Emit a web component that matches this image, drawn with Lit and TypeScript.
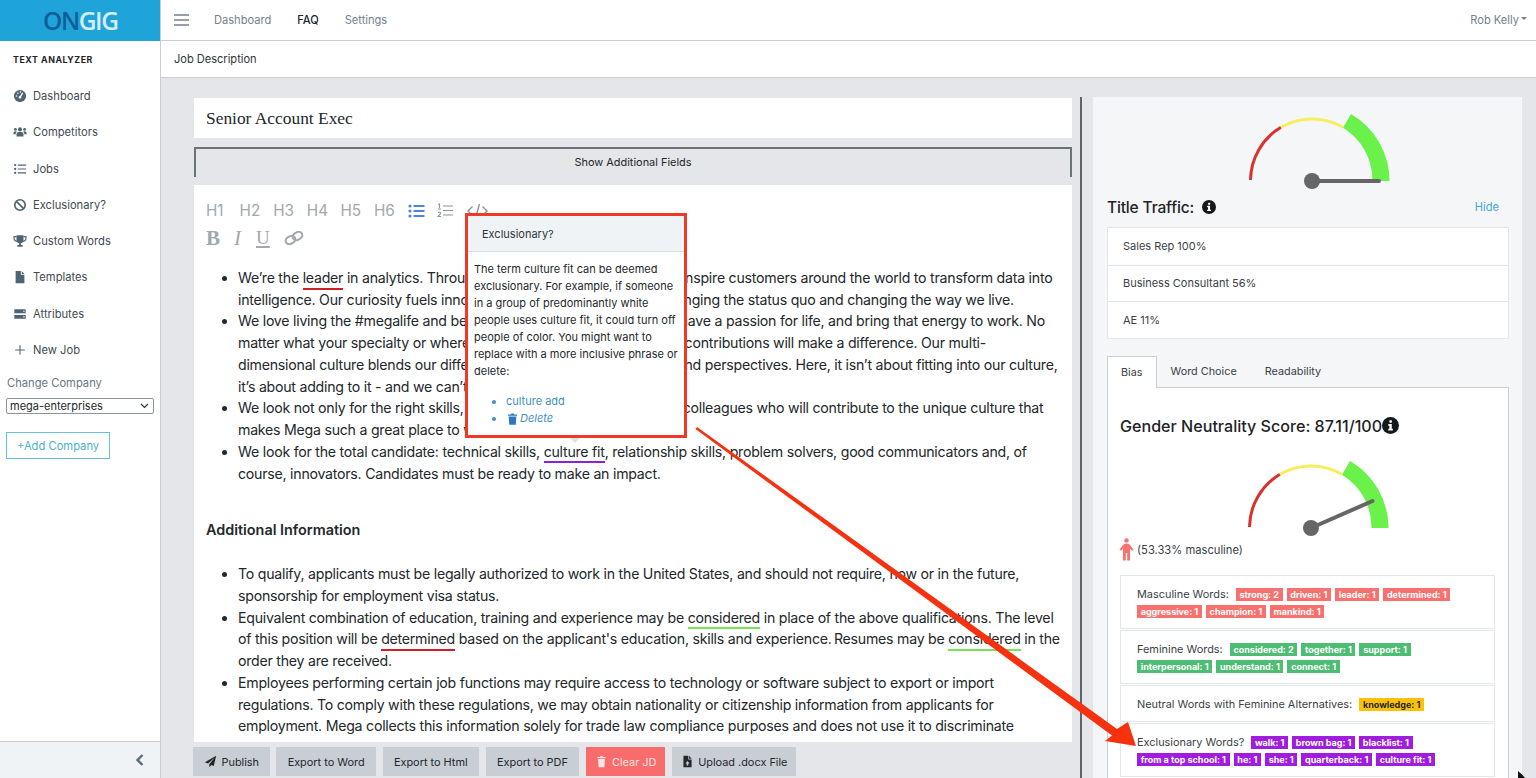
import { LitElement, html, css, svg } from "lit";
import { customElement } from "lit/decorators.js";

const gauge = (tx: number, ty: number) => html`<svg class="gauge" width="160" height="90" viewBox="-80 -80 160 90">
  <path d="M-61.5 -1A62 62 0 0 1 -31 -53.7" fill="none" stroke="#d9312b" stroke-width="3"/>
  <path d="M-31 -53.7A62 62 0 0 1 31 -53.7" fill="none" stroke="#f7ee5f" stroke-width="3"/>
  <path d="M31 -53.3L39 -67A77.5 77.5 0 0 1 77.5 0H60.5A61.5 61.5 0 0 0 31 -53.3Z" fill="#6bf24a"/>
  <line x1="0" y1="0" x2="${tx}" y2="${ty}" stroke="#666" stroke-width="4" stroke-linecap="round"/>
  <circle r="8" fill="#666"/>
</svg>`;

const info = (s: number) => html`<svg width="${s}" height="${s}" viewBox="0 0 16 16"><circle cx="8" cy="8" r="8" fill="#15191c"/><rect x="6.9" y="3" width="2.4" height="2.4" rx=".6" fill="#fff"/><path d="M5.9 6.6H9.2V11H10.2V12.6H5.9V11H6.9V8.2H5.9Z" fill="#fff"/></svg>`;

const I: Record<string, any> = {
  dash: svg`<circle cx="8" cy="8" r="7" fill="currentColor"/><path d="M8 9.5L11 4.5" stroke="#fff" stroke-width="1.5"/><circle cx="8" cy="9.5" r="1.4" fill="#fff"/><circle cx="4" cy="8" r=".9" fill="#fff"/><circle cx="5.5" cy="4.8" r=".9" fill="#fff"/><circle cx="8.5" cy="3.5" r=".9" fill="#fff"/>`,
  users: svg`<circle cx="8" cy="5" r="2.3" fill="currentColor"/><circle cx="2.8" cy="5" r="1.6" fill="currentColor"/><circle cx="13.2" cy="5" r="1.6" fill="currentColor"/><path d="M4 13V10.5Q4 8 6.5 8H9.5Q12 8 12 10.5V13Z M0.5 9.5Q.5 7.2 2.8 7.2Q3.8 7.2 4.4 7.8Q3.1 8.8 3 10.5H.5Z M15.5 9.5Q15.5 7.2 13.2 7.2Q12.2 7.2 11.6 7.8Q12.9 8.8 13 10.5H15.5Z" fill="currentColor"/>`,
  list: svg`<circle cx="2.5" cy="3.5" r="1.3" fill="currentColor"/><circle cx="2.5" cy="8" r="1.3" fill="currentColor"/><circle cx="2.5" cy="12.5" r="1.3" fill="currentColor"/><path d="M5.5 3.5H15M5.5 8H15M5.5 12.5H15" stroke="currentColor" stroke-width="1.4"/>`,
  ban: svg`<circle cx="8" cy="8" r="6" fill="none" stroke="currentColor" stroke-width="1.9"/><path d="M3.8 3.8L12.2 12.2" stroke="currentColor" stroke-width="1.9"/>`,
  trophy: svg`<path d="M4 1.5H12V6.5Q12 10 9 10.5V12.5H11V14.5H5V12.5H7V10.5Q4 10 4 6.5Z" fill="currentColor"/><path d="M4 3H1.2V5Q1.2 7.8 4.5 8.4M12 3H14.8V5Q14.8 7.8 11.5 8.4" fill="none" stroke="currentColor" stroke-width="1.3"/>`,
  file: svg`<path d="M3 1H9V5.5H13V15H3ZM10 1L13 4.5H10Z" fill="currentColor"/>`,
  server: svg`<path d="M1.5 2.5H14.5V7H1.5ZM1.5 9H14.5V13.5H1.5Z" fill="currentColor"/><circle cx="12.5" cy="4.8" r=".8" fill="#fff"/><circle cx="12.5" cy="11.2" r=".8" fill="#fff"/>`,
  plus: svg`<path d="M8 2.5V13.5M2.5 8H13.5" stroke="currentColor" stroke-width="1.2"/>`,
  plane: svg`<path d="M15 1L1 9L5 10.6L13 3.5L6.5 11.4V15L9 12.3L12 13.5Z" fill="currentColor"/>`,
  trash: svg`<path d="M3 2.5H6.2L6.8 1.3H9.2L9.8 2.5H13V4H3ZM3.8 5H12.2L11.6 15H4.4Z" fill="currentColor"/>`,
  upload: svg`<path d="M3 1H9V5.5H13V15H3ZM10 1L13 4.5H10Z" fill="currentColor"/><path d="M8 7.5L5.5 10.5H7V13H9V10.5H10.5Z" fill="#c8ced3"/>`,
};
const icon = (n: string, s = 14) => html`<svg class="ic" width="${s}" height="${s}" viewBox="0 0 16 16">${I[n]}</svg>`;

const nav = [["dash","Dashboard"],["users","Competitors"],["list","Jobs"],["ban","Exclusionary?"],["trophy","Custom Words"],["file","Templates"],["server","Attributes"],["plus","New Job"]];

const badgeRows = [
  { label: "Masculine Words:", cls: "red", items: ["strong: 2","driven: 1","leader: 1","determined: 1","aggressive: 1","champion: 1","mankind: 1"] },
  { label: "Feminine Words:", cls: "green", items: ["considered: 2","together: 1","support: 1","interpersonal: 1","understand: 1","connect: 1"] },
  { label: "Neutral Words with Feminine Alternatives:", cls: "yellow", items: ["knowledge: 1"] },
  { label: "Exclusionary Words?", cls: "purple", items: ["walk: 1","brown bag: 1","blacklist: 1","from a top school: 1","he: 1","she: 1","quarterback: 1","culture fit: 1"] },
];

@customElement("app-root")
export class AppRoot extends LitElement {
  static styles = css`
    :host { display: block; position: relative; width: 1536px; height: 778px; overflow: hidden; font-family: Inter, "Liberation Sans", sans-serif; color: #23282c; background: #e4e6e9; }
    .shell { display: grid; grid-template-columns: 161px 1fr; height: 778px; }
    .side { background: #fff; border-right: 1px solid #c8ced3; display: flex; flex-direction: column; height: 778px; }
    .brand { height: 41px; background: #1fa4da; display: flex; align-items: center; padding-left: 43px; font: 600 24.5px "Open Sans", sans-serif; letter-spacing: -1.4px; box-sizing: border-box; }
    .brand b { font-weight: 600; color: #0f5e98; }
    .brand span { color: #d5eef9; }
    .sidehead { font-size: 8.8px; font-weight: 700; letter-spacing: .55px; padding: 14px 0 0 13px; height: 23px; line-height: 9px; color: #1f2428; box-sizing: content-box; }
    .navlist { display: flex; flex-direction: column; margin-top: 0; }
    .navitem { height: 36.25px; display: flex; align-items: center; font-size: 11.2px; color: #3f4a52; padding-left: 13px; gap: 6px; }
    .navitem .ic { color: #4f6472; }
    .change { font-size: 11.2px; color: #6b7680; padding: 8px 0 0 7px; line-height: 14px; }
    .sel { margin: 8px 0 0 6px; width: 148px; height: 16px; box-sizing: border-box; border: 1px solid #8d949b; border-radius: 2px; display: flex; align-items: center; justify-content: space-between; padding: 0 4px 0 3px; font-size: 11px; color: #23282c; }
    .addbtn { margin: 18px 0 0 6px; width: 104px; height: 27px; box-sizing: border-box; border: 1px solid #63c2de; color: #4cb0cf; font-size: 11.2px; display: flex; align-items: center; justify-content: center; }
    .collapse { margin-top: auto; height: 36px; background: #f0f3f5; border-top: 1px solid #c8ced3; display: flex; align-items: center; justify-content: flex-end; padding-right: 15px; color: #5b6b78; }
    .main { display: flex; flex-direction: column; min-width: 0; height: 778px; }
    .top { height: 41px; background: #fff; border-bottom: 1px solid #c8ced3; box-sizing: border-box; display: flex; align-items: center; padding: 0 9px 1px 13px; font-size: 11.1px; color: #73818f; }
    .burger { display: flex; margin-right: 25px; color: #73818f; }
    .toplinks { display: flex; gap: 26px; flex: 1; }
    .toplinks .on { color: #23282c; font-weight: 500; }
    .user { display: flex; align-items: center; gap: 2px; }
    .caret { width: 0; height: 0; border: 3.5px solid transparent; border-top-color: #73818f; border-bottom: 0; margin-bottom: 3px; }
    .crumb { height: 37px; background: #fff; border-bottom: 1px solid #c8ced3; box-sizing: border-box; display: flex; align-items: center; padding-left: 13px; font-size: 11.05px; color: #2f353a; }
    .work { flex: 1; display: flex; padding: 19px 0 0 33px; min-height: 0; }
    .left { width: 878px; display: flex; flex-direction: column; }
    .title { height: 40px; margin-top: 1px; flex: none; background: #fff; display: flex; align-items: center; padding-left: 12px; font: 17.4px "Liberation Serif", serif; color: #23282c; }
    .more { height: 30px; flex: none; margin-top: 9px; padding-bottom: 2px; box-sizing: border-box; background: #e4e6e9; border: 2px solid #6c7378; border-bottom: 0; display: flex; align-items: center; justify-content: center; font-size: 10.95px; color: #23282c; }
    .editor { height: 557px; margin-top: 8px; flex: none; background: #fff; overflow: hidden; padding: 17px 12px 0; box-sizing: border-box; }
    .tools { display: flex; align-items: center; color: #a2a8ad; font-size: 15.3px; height: 17px; }
    .tools span { width: 33.6px; }
    .tools .list { margin-right: 12px; }
    .tools .olist { margin-right: 14px; }
    .tools2 { display: flex; align-items: center; color: #a2a8ad; height: 20px; margin-top: 9px; gap: 0; }
    .tools2 .b { font: 700 21px "Liberation Serif", serif; width: 25px; }
    .tools2 .i { font: italic 400 21px "Liberation Serif", serif; width: 25px; padding-left: 3px; box-sizing: border-box; }
    .tools2 .u { font: 400 19px "Liberation Serif", serif; width: 28px; text-decoration: underline; text-decoration-thickness: 2px; text-underline-offset: 2px; }
    ul.body { margin: 19px 0 0; padding: 0 0 0 32px; font-size: 14.15px; letter-spacing: -.24px; line-height: 21.73px; color: #23282c; white-space: nowrap; }
    ul.second { margin-top: 22px; }
    h4 { margin: 35px 0 0; font-size: 14.4px; font-weight: 600; line-height: 21.75px; }
    .ul { border-bottom: 2px solid; padding-bottom: 1.5px; }
    .r { border-color: #d01f22; } .g { border-color: #77e35a; } .p { border-color: #8a22d8; }
    .btns { display: flex; gap: 6.8px; margin-top: 5px; flex: none; margin-left: -1px; }
    .btn { height: 29px; background: #c8ced3; display: flex; align-items: center; gap: 5px; padding: 0 10.5px; font-size: 10.9px; color: #23282c; box-sizing: border-box; }
    .btn.txt { padding: 0 11.3px; }
    .btn.tight { padding: 0 9px; gap: 4px; }
    .btn.danger { background: #f86c6b; color: #fbe5e5; }
    .rule { width: 2px; background: #5e6468; margin: 0 11px 0 8px; flex: none; }
    .right { width: 429px; background: #f5f6f7; flex: none; padding: 0 13px 0 14px; box-sizing: border-box; overflow: hidden; display: flex; flex-direction: column; }
    .gaugewrap { display: flex; justify-content: center; height: 95px; padding-top: 4px; flex: none; }
    .gauge { display: block; margin-left: 7px; }
    .tthead { display: flex; align-items: center; height: 22px; font-size: 15.5px; letter-spacing: -.15px; font-weight: 500; gap: 7.5px; color: #1e2327; flex: none; }
    .hide { margin-left: auto; font-size: 11.1px; letter-spacing: 0; font-weight: 400; color: #45a9d8; padding-right: 10px; }
    .ttlist { margin-top: 9px; background: #fff; border: 1px solid #e4e7ea; flex: none; }
    .ttlist div { height: 36.6px; display: flex; align-items: center; padding-left: 15px; font-size: 11px; color: #3a4148; border-top: 1px solid #e4e7ea; box-sizing: border-box; }
    .ttlist div:first-child { border-top: 0; }
    .tabs { display: flex; margin-top: 17px; height: 32px; flex: none; font-size: 10.85px; color: #3a4148; position: relative; z-index: 1; }
    .tab { display: flex; align-items: center; padding: 0 14px 1px 14px; }
    .tab.on { background: #fff; border: 1px solid #c8ced3; border-bottom: 0; padding: 0 13px 1px; height: 32px; box-sizing: border-box; }
    .tabbody { flex: 1; background: #fff; border: 1px solid #c8ced3; border-bottom: 0; margin-top: -1px; padding: 0 13px 0 12px; }
    .score { display: flex; align-items: center; font-size: 16.1px; font-weight: 500; color: #1e2327; margin-top: 28px; height: 20px; }
    .gauge2 { display: flex; justify-content: center; height: 91px; margin-top: 12px; }
    .masc { display: flex; align-items: center; font-size: 11.2px; color: #3a4148; height: 24px; margin-top: -1px; gap: 3px; margin-left: -1px; }
    .wordlist { margin-top: 13px; }
    .wrow { border: 1px solid #e4e7ea; padding: 12px 16px 10px; margin-bottom: 1px; font-size: 10.92px; color: #3a4148; display: flex; flex-wrap: wrap; gap: 4px 4px; align-items: center; }
    .wrow .lbl { margin-right: 3px; height: 13px; line-height: 13px; }
    .bdg { height: 13px; padding: 0 3.7px; font-size: 9px; line-height: 13px; font-weight: 700; color: #fff; }
    .red { background: #f8716f; } .green { background: #4dbd74; } .yellow { background: #ffc107; color: #23282c; } .purple { background: #a01de0; }
    .pop { position: absolute; left: 465px; top: 213px; width: 222px; height: 225px; box-sizing: border-box; background: #fff; border: 3px solid #ee3a24; z-index: 3; }
    .pophead { height: 36px; background: #f0f3f5; border-bottom: 1px solid #d8dde2; display: flex; align-items: center; padding-left: 14px; font-size: 11px; color: #2f353a; box-sizing: border-box; }
    .popbody { padding: 9px 0 0 6px; font-size: 11px; line-height: 17px; color: #23282c; white-space: nowrap; }
    .popbody ul { margin: 13px 0 0; padding-left: 32px; color: #3f8fc4; }
    .popbody li::marker { color: #3f8fc4; }
    .del { font-style: italic; display: inline-flex; align-items: center; gap: 1px; vertical-align: top; }
    .tip { position: absolute; left: 570px; top: 438px; width: 0; height: 0; border: 5px solid transparent; border-top-color: #dfe3e6; border-bottom: 0; z-index: 2; }
    .arrow { position: absolute; left: 0; top: 0; z-index: 4; pointer-events: none; }
  `;

  render() {
    return html`<div class="shell">
      <aside class="side">
        <div class="brand"><b>ON</b><span>GIG</span></div>
        <div class="sidehead">TEXT ANALYZER</div>
        <div class="navlist">${nav.map(([i, t]) => html`<div class="navitem">${icon(i)}<span>${t}</span></div>`)}</div>
        <div class="change">Change Company</div>
        <div class="sel"><span>mega-enterprises</span><svg width="9" height="6" viewBox="0 0 9 6"><path d="M1 1L4.5 4.5L8 1" fill="none" stroke="#333" stroke-width="1.2"/></svg></div>
        <div class="addbtn">+Add Company</div>
        <div class="collapse"><svg width="10" height="12" viewBox="0 0 10 12"><path d="M7.5 1L2.5 6L7.5 11" fill="none" stroke="currentColor" stroke-width="2.4"/></svg></div>
      </aside>
      <div class="main">
        <div class="top">
          <div class="burger"><svg width="15" height="12" viewBox="0 0 15 12"><path d="M0 1H15M0 6H15M0 11H15" stroke="currentColor" stroke-width="1.4"/></svg></div>
          <div class="toplinks"><span>Dashboard</span><span class="on">FAQ</span><span>Settings</span></div>
          <div class="user"><span>Rob Kelly</span><i class="caret"></i></div>
        </div>
        <div class="crumb">Job Description</div>
        <div class="work">
          <div class="left">
            <div class="title">Senior Account Exec</div>
            <div class="more">Show Additional Fields</div>
            <div class="editor">
              <div class="tools">
                <span>H1</span><span>H2</span><span>H3</span><span>H4</span><span>H5</span><span>H6</span>
                <svg class="list" width="17" height="14" viewBox="0 0 17 14"><g fill="#4f82e3"><circle cx="2" cy="2" r="1.6"/><circle cx="2" cy="7" r="1.6"/><circle cx="2" cy="12" r="1.6"/></g><path d="M5.5 2H16.5M5.5 7H16.5M5.5 12H16.5" stroke="#4f82e3" stroke-width="2"/></svg>
                <svg class="olist" width="16" height="15" viewBox="0 0 16 15"><path d="M1.2 1.5L2.5 1V5M1 6H4M1 9.5Q3.8 8.5 3.6 10.5L1 13.5H4M6 3H16M6 7.5H16M6 12H16" fill="none" stroke="#8d949a" stroke-width="1.1"/></svg>
                <svg width="21" height="16" viewBox="0 0 21 16"><path d="M5.5 3.5L1 8L5.5 12.5M15.5 3.5L20 8L15.5 12.5M12.5 1L8.5 15" fill="none" stroke="#8d949a" stroke-width="1.4"/></svg>
              </div>
              <div class="tools2"><span class="b">B</span><span class="i">I</span><span class="u">U</span>
                <svg width="20" height="14" viewBox="0 0 20 14"><g fill="none" stroke="#a2a8ad" stroke-width="2"><rect x="1.5" y="5.5" width="10" height="7" rx="3.5" transform="rotate(-30 6.5 9)"/><rect x="8.5" y="1.5" width="10" height="7" rx="3.5" transform="rotate(-30 13.5 5)"/></g></svg>
              </div>
              <ul class="body">
                <li>We’re the <span class="ul r">leader</span> in analytics. Through innovation and our insight, we inspire customers around the world to transform data into<br>intelligence. Our curiosity fuels innovation, and so we thrive on challenging the status quo and changing the way we live.</li>
                <li>We love living the #megalife and believe in it. We recruit people who have a passion for life, and bring that energy to work. No<br>matter what your specialty or where you work, your unique skills and contributions will make a difference. Our multi-<br>dimensional culture blends our different backgrounds, experiences, and perspectives. Here, it isn’t about fitting into our culture,<br>it’s about adding to it - and we can’t wait to meet you.</li>
                <li>We look not only for the right skills, but also for talented and inspired colleagues who will contribute to the unique culture that<br>makes Mega such a great place to work.</li>
                <li>We look for the total candidate: technical skills, <span class="ul p">culture fit</span>, relationship skills, problem solvers, good communicators and, of<br>course, innovators. Candidates must be ready to make an impact.</li>
              </ul>
              <h4>Additional Information</h4>
              <ul class="body second">
                <li>To qualify, applicants must be legally authorized to work in the United States, and should not require, now or in the future,<br>sponsorship for employment visa status.</li>
                <li>Equivalent combination of education, training and experience may be <span class="ul g">considered</span> in place of the above qualifications. The level<br>of this position will be <span class="ul r">determined</span> based on the applicant's education, skills and experience.&thinsp;Resumes may be <span class="ul g">considered</span> in the<br>order they are received.</li>
                <li>Employees performing certain job functions may require access to technology or software subject to export or import<br>regulations. To comply with these regulations, we may obtain nationality or citizenship information from applicants for<br>employment. Mega collects this information solely for trade law compliance purposes and does not use it to discriminate</li>
              </ul>
            </div>
            <div class="btns">
              <div class="btn">${icon("plane", 13)}Publish</div>
              <div class="btn txt">Export to Word</div>
              <div class="btn txt">Export to Html</div>
              <div class="btn txt">Export to PDF</div>
              <div class="btn tight danger">${icon("trash", 13)}Clear JD</div>
              <div class="btn tight">${icon("upload", 13)}Upload .docx File</div>
            </div>
          </div>
          <div class="rule"></div>
          <div class="right">
            <div class="gaugewrap">${gauge(67, 0)}</div>
            <div class="tthead"><span>Title Traffic:</span>${info(14)}<span class="hide">Hide</span></div>
            <div class="ttlist"><div>Sales Rep 100%</div><div>Business Consultant 56%</div><div>AE 11%</div></div>
            <div class="tabs"><div class="tab on">Bias</div><div class="tab">Word Choice</div><div class="tab">Readability</div></div>
            <div class="tabbody">
              <div class="score"><span>Gender Neutrality Score: 87.11/100</span>${info(17)}</div>
              <div class="gauge2">${gauge(61.5, -27)}</div>
              <div class="masc"><svg width="15" height="23" viewBox="0 0 15 23"><circle cx="7.5" cy="2.5" r="2.2" fill="#f8716f"/><path d="M7.5 5.5Q10 5.5 11 7L14.5 11.5L13 12.8L11 10.5V22.5H8.2V15H6.8V22.5H4V10.5L2 12.8L.5 11.5L4 7Q5 5.5 7.5 5.5Z" fill="#f8716f"/></svg><span>(53.33% masculine)</span></div>
              <div class="wordlist">${badgeRows.map((r) => html`<div class="wrow"><span class="lbl">${r.label}</span>${r.items.map((b) => html`<span class="bdg ${r.cls}">${b}</span>`)}</div>`)}</div>
            </div>
          </div>
        </div>
      </div>
    </div>
    <div class="pop">
      <div class="pophead">Exclusionary?</div>
      <div class="popbody">The term culture fit can be deemed<br>exclusionary. For example, if someone<br>in a group of predominantly white<br>people uses culture fit, it could turn off<br>people of color. You might want to<br>replace with a more inclusive phrase or<br>delete:
        <ul><li>culture add</li><li><span class="del"><svg width="13" height="14" viewBox="0 0 16 16"><path d="M2.5 2.5H6L6.6 1.3H9.4L10 2.5H13.5V4H2.5ZM3.3 5H12.7L12 15H4Z" fill="#2b78c2"/></svg>Delete</span></li></ul>
      </div>
    </div>
    <i class="tip"></i>
    <svg class="arrow" width="1536" height="778" viewBox="0 0 1536 778">
      <path d="M695.5 429L697 427L1117 729L1128 722L1136 746L1105 741L1112 735.5Z" fill="#f6310f"/>
      <path d="M1518 771V778H1525L1522 774.5Z" fill="#111"/>
    </svg>`;
  }
}
